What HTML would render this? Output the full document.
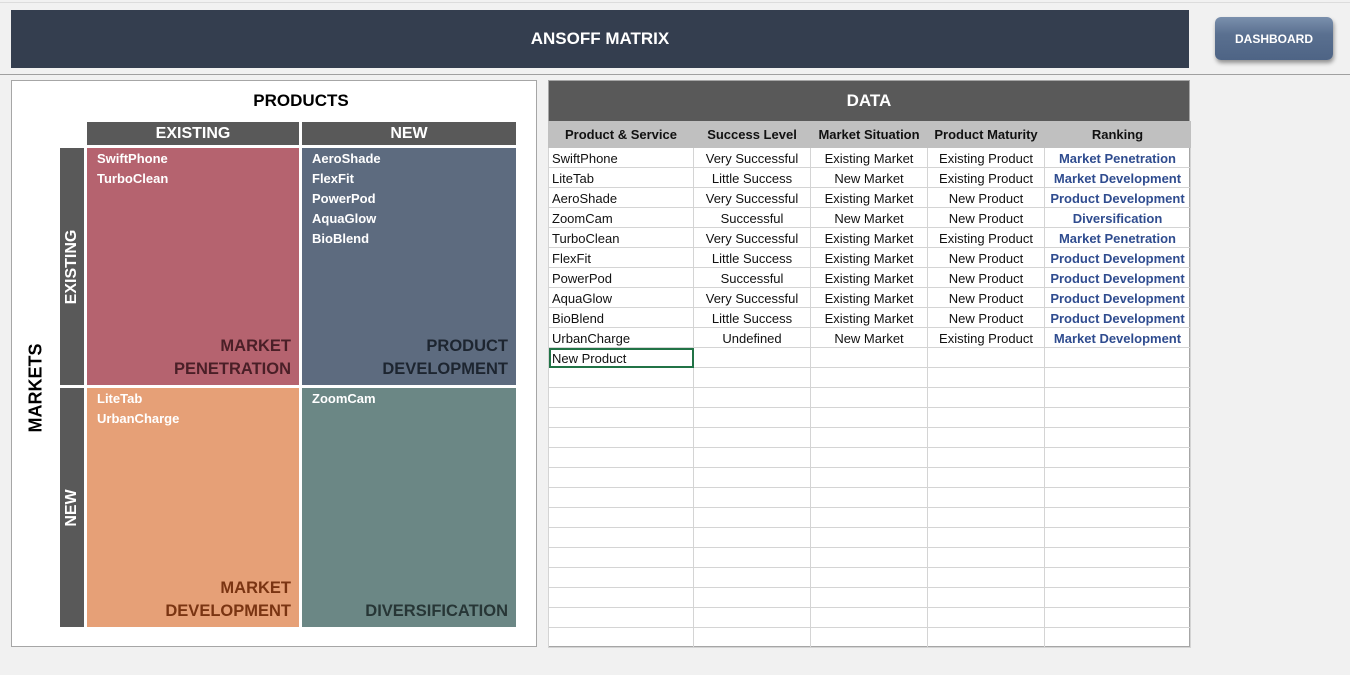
<!DOCTYPE html>
<html><head><meta charset="utf-8"><style>
*{margin:0;padding:0;box-sizing:border-box}
body{width:1350px;height:675px;background:#f1f1f1;position:relative;overflow:hidden;font-family:"Liberation Sans",Arial,sans-serif}
.a{position:absolute}
.hdr{left:11px;top:10px;width:1178px;height:58px;background:#343e4f;color:#fff;font-weight:bold;font-size:17px;text-align:center;line-height:58px}
.btn{left:1215px;top:17px;width:118px;height:43px;border-radius:6px;background:linear-gradient(#7b90ad,#5a7090 40%,#4e6485);color:#fff;font-weight:bold;font-size:12px;text-align:center;line-height:45px;box-shadow:1px 3px 4px rgba(0,0,0,.4)}
.panel{background:#fff;border:1px solid #a6a6a6}
.q{color:#fff;font-weight:bold;font-size:13px;padding:1px 10px;line-height:20px}
.ql{position:absolute;right:8px;bottom:4px;text-align:right;font-size:16.5px;line-height:23px;font-weight:bold}
.ch{background:#595959;color:#fff;font-weight:bold;font-size:16px;text-align:center;line-height:24px}
.vt{background:#595959;color:#fff;font-weight:bold;font-size:16px}
.vt span,.mk span{position:absolute;left:50%;top:50%;transform:translate(-50%,-50%) rotate(-90deg);white-space:nowrap}
table{border-collapse:collapse;table-layout:fixed;font-size:13px}
td{height:20px;border:1px solid #d4d4d4;padding:1px 3px 0;white-space:nowrap;overflow:hidden;text-align:center;color:#111}
td:first-child{text-align:left}
td.r{color:#2f4c8f;font-weight:bold}
th{height:26px;background:#c0c0c0;font-size:13px;font-weight:bold;border:1px solid #c0c0c0;color:#111}
</style></head><body>
<div class="a" style="left:0;top:2px;width:1350px;height:1px;background:#dcdcdc"></div>
<div class="a hdr">ANSOFF MATRIX</div>
<div class="a btn">DASHBOARD</div>
<div class="a" style="left:0;top:74px;width:1350px;height:1px;background:#a0a0a0"></div>

<div class="a panel" style="left:11px;top:80px;width:526px;height:567px"></div>
<div class="a" style="left:87px;top:91px;width:428px;text-align:center;font-weight:bold;font-size:17px">PRODUCTS</div>
<div class="a ch" style="left:87px;top:122px;width:212px;height:23px">EXISTING</div>
<div class="a ch" style="left:302px;top:122px;width:214px;height:23px">NEW</div>
<div class="a vt" style="left:60px;top:148px;width:24px;height:237px"><span>EXISTING</span></div>
<div class="a vt" style="left:60px;top:388px;width:24px;height:239px"><span>NEW</span></div>
<div class="a mk" style="left:24px;top:148px;width:24px;height:479px;font-weight:bold;font-size:18px"><span>MARKETS</span></div>

<div class="a q" style="left:87px;top:148px;width:212px;height:237px;background:#b5636f">SwiftPhone<br>TurboClean<div class="ql" style="color:#4a1f27">MARKET<br>PENETRATION</div></div>
<div class="a q" style="left:302px;top:148px;width:214px;height:237px;background:#5d6b7f">AeroShade<br>FlexFit<br>PowerPod<br>AquaGlow<br>BioBlend<div class="ql" style="color:#1d2530">PRODUCT<br>DEVELOPMENT</div></div>
<div class="a q" style="left:87px;top:388px;width:212px;height:239px;background:#e6a077">LiteTab<br>UrbanCharge<div class="ql" style="color:#7a3412">MARKET<br>DEVELOPMENT</div></div>
<div class="a q" style="left:302px;top:388px;width:214px;height:239px;background:#6b8785">ZoomCam<div class="ql" style="color:#273636">DIVERSIFICATION</div></div>

<div class="a panel" style="left:548px;top:80px;width:642px;height:567px"></div>
<div class="a" style="left:549px;top:81px;width:640px;height:40px;background:#595959;color:#fff;font-weight:bold;font-size:17px;text-align:center;line-height:40px">DATA</div>
<table class="a" style="left:548px;top:121px;width:642px">
<colgroup><col style="width:145px"><col style="width:117px"><col style="width:117px"><col style="width:117px"><col style="width:146px"></colgroup>
<tr><th>Product &amp; Service</th><th>Success Level</th><th>Market Situation</th><th>Product Maturity</th><th>Ranking</th></tr>
<tr><td>SwiftPhone</td><td>Very Successful</td><td>Existing Market</td><td>Existing Product</td><td class="r">Market Penetration</td></tr>
<tr><td>LiteTab</td><td>Little Success</td><td>New Market</td><td>Existing Product</td><td class="r">Market Development</td></tr>
<tr><td>AeroShade</td><td>Very Successful</td><td>Existing Market</td><td>New Product</td><td class="r">Product Development</td></tr>
<tr><td>ZoomCam</td><td>Successful</td><td>New Market</td><td>New Product</td><td class="r">Diversification</td></tr>
<tr><td>TurboClean</td><td>Very Successful</td><td>Existing Market</td><td>Existing Product</td><td class="r">Market Penetration</td></tr>
<tr><td>FlexFit</td><td>Little Success</td><td>Existing Market</td><td>New Product</td><td class="r">Product Development</td></tr>
<tr><td>PowerPod</td><td>Successful</td><td>Existing Market</td><td>New Product</td><td class="r">Product Development</td></tr>
<tr><td>AquaGlow</td><td>Very Successful</td><td>Existing Market</td><td>New Product</td><td class="r">Product Development</td></tr>
<tr><td>BioBlend</td><td>Little Success</td><td>Existing Market</td><td>New Product</td><td class="r">Product Development</td></tr>
<tr><td>UrbanCharge</td><td>Undefined</td><td>New Market</td><td>Existing Product</td><td class="r">Market Development</td></tr>
<tr><td style="outline:2px solid #217346;outline-offset:-2px">New Product</td><td></td><td></td><td></td><td></td></tr>
<tr><td></td><td></td><td></td><td></td><td></td></tr>
<tr><td></td><td></td><td></td><td></td><td></td></tr>
<tr><td></td><td></td><td></td><td></td><td></td></tr>
<tr><td></td><td></td><td></td><td></td><td></td></tr>
<tr><td></td><td></td><td></td><td></td><td></td></tr>
<tr><td></td><td></td><td></td><td></td><td></td></tr>
<tr><td></td><td></td><td></td><td></td><td></td></tr>
<tr><td></td><td></td><td></td><td></td><td></td></tr>
<tr><td></td><td></td><td></td><td></td><td></td></tr>
<tr><td></td><td></td><td></td><td></td><td></td></tr>
<tr><td></td><td></td><td></td><td></td><td></td></tr>
<tr><td></td><td></td><td></td><td></td><td></td></tr>
<tr><td></td><td></td><td></td><td></td><td></td></tr>
<tr><td></td><td></td><td></td><td></td><td></td></tr>
</table>
</body></html>
